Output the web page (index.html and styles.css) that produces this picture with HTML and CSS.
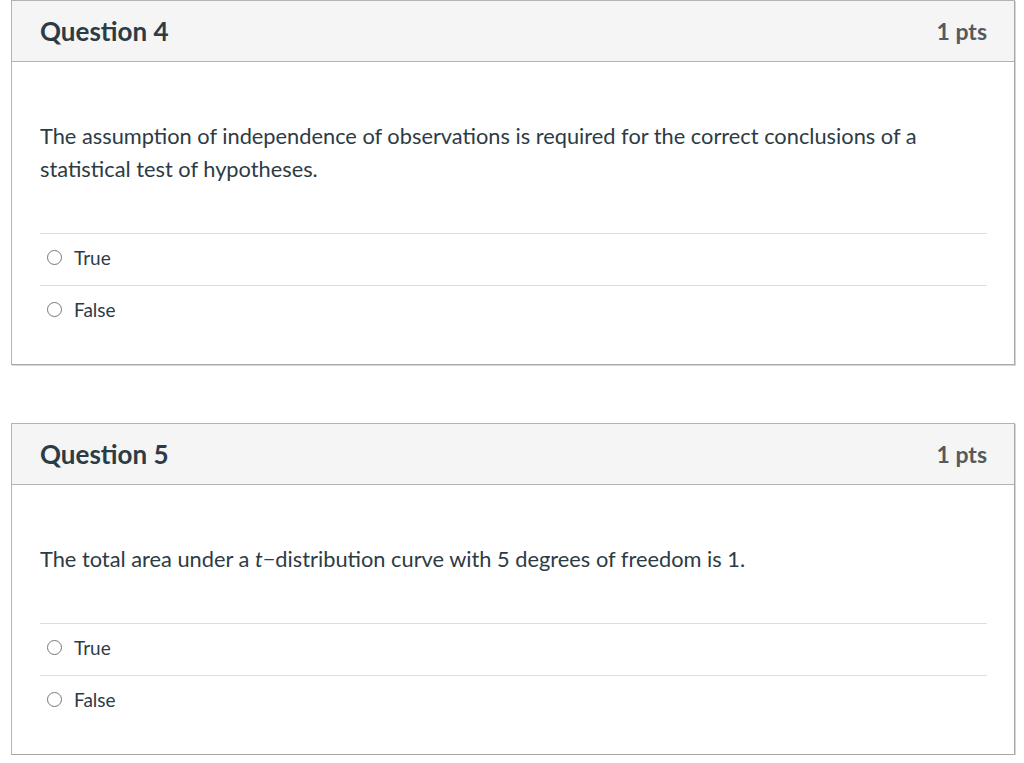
FILE: index.html
```html
<!DOCTYPE html>
<html lang="en">
<head>
<meta charset="utf-8">
<title>Quiz</title>
<link rel="stylesheet" href="styles.css">
</head>
<body>
<div class="quiz">
  <section class="question">
    <header class="q-header">
      <h2 class="q-title">Question 4</h2>
      <span class="q-points">1 pts</span>
    </header>
    <div class="q-body">
      <p class="q-text">The assumption of independence of observations is required for the correct conclusions of a statistical test of hypotheses.</p>
      <ul class="answers">
        <li class="answer"><span class="radio"></span><span class="label">True</span></li>
        <li class="answer"><span class="radio"></span><span class="label">False</span></li>
      </ul>
    </div>
  </section>
  <section class="question">
    <header class="q-header">
      <h2 class="q-title">Question 5</h2>
      <span class="q-points">1 pts</span>
    </header>
    <div class="q-body">
      <p class="q-text">The total area under a <em>t</em>−distribution curve with 5 degrees of freedom is 1.</p>
      <ul class="answers">
        <li class="answer"><span class="radio"></span><span class="label">True</span></li>
        <li class="answer"><span class="radio"></span><span class="label">False</span></li>
      </ul>
    </div>
  </section>
</div>
</body>
</html>
```
FILE: styles.css
```css
html, body {
  margin: 0;
  padding: 0;
  background: #ffffff;
}
body {
  font-family: Lato, "Open Sans", sans-serif;
  color: #2d3b45;
}
.quiz {
  display: flex;
  flex-direction: column;
  gap: 58px;
  margin: 0 9px 0 11px;
}
.question {
  border: 1px solid #b3b3b3;
  border-right-color: #a8a8a8;
  border-bottom-color: #a8a8a8;
  box-shadow: 1px 1px 0 #d6d6d6;
}
.q-header {
  display: flex;
  align-items: center;
  justify-content: space-between;
  height: 60px;
  padding: 0 27px 0 28px;
  background: #f5f5f5;
  border-bottom: 1px solid #b3b3b3;
}
.q-title {
  margin: 0;
  font-size: 26px;
  font-weight: 700;
  color: #2d3b45;
}
.q-points {
  font-size: 23px;
  font-weight: 700;
  color: #555a5e;
}
.q-body {
  padding: 57px 27px 27px 28px;
}
.q-text {
  margin: 0 0 48px;
  font-size: 21.8px;
  line-height: 33px;
}
.q-text em {
  font-style: italic;
}
.answers {
  list-style: none;
  margin: 0;
  padding: 0;
}
.answer {
  display: flex;
  align-items: center;
  box-sizing: border-box;
  height: 52px;
  padding-bottom: 4px;
  border-top: 1px solid #dedede;
  font-size: 19px;
}
.radio {
  box-sizing: border-box;
  width: 15px;
  height: 15px;
  border: 1px solid #777777;
  border-radius: 50%;
  margin: 0 12px 0 7px;
  flex: none;
}
.label {
  color: #2d3b45;
}
```
